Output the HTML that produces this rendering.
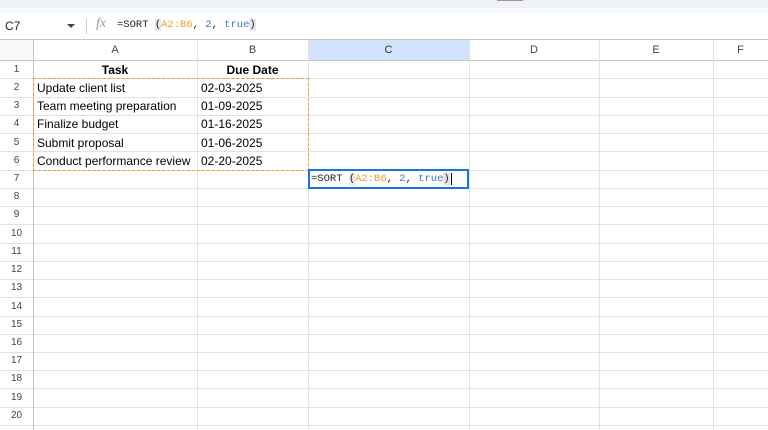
<!DOCTYPE html>
<html><head><style>
*{margin:0;padding:0;box-sizing:border-box}
body{width:768px;height:430px;overflow:hidden;background:#fff;font-family:"Liberation Sans",Arial,sans-serif;position:relative}
.a{position:absolute}
.hl{position:absolute;left:0;width:768px;height:1px;background:#e1e1e1}
.vl{position:absolute;top:40px;width:1px;height:390px;background:#e1e1e1}
.rn{position:absolute;left:0;width:33px;text-align:center;font-size:10px;color:#444;height:18px;line-height:18px}
.ch{position:absolute;top:40px;height:20px;line-height:20px;text-align:center;font-size:11px;color:#444}
.t{position:absolute;font-size:12px;color:#000;height:18px;line-height:18px;white-space:nowrap}
.mono{font-family:"Liberation Mono",monospace}
</style></head><body>
<div class="a" style="left:0;top:0;width:768px;height:8px;background:#eef1f6"></div>
<div class="a" style="left:0;top:8px;width:768px;height:6px;background:#f8fafd"></div>
<div class="a" style="left:497px;top:0;width:26px;height:1px;background:#999"></div>
<div class="a" style="left:5px;top:19px;font-size:12px;color:#222">C7</div>
<div class="a" style="left:67px;top:24px;width:0;height:0;border-left:4px solid transparent;border-right:4px solid transparent;border-top:4px solid #444"></div>
<div class="a" style="left:86px;top:18px;width:1px;height:16px;background:#ccc"></div>
<div class="a" style="left:96px;top:16px;font-size:14px;color:#999;font-style:italic;font-family:'Liberation Serif',serif">fx</div>
<div class="a mono" style="left:117px;top:19px;font-size:10.5px;color:#222">=SORT <span style="background:#e6e6e6">(</span><span style="color:#f39c36">A2:B6</span>, <span style="color:#3c78d8">2</span>, <span style="color:#3c78d8">true</span><span style="background:#e6e6e6">)</span></div>
<div class="a" style="left:0;top:40px;width:33px;height:20px;background:#f8f9fa"></div>
<div class="a" style="left:308px;top:40px;width:161px;height:20px;background:#d3e3fd"></div>
<div class="hl" style="top:39px;background:#c7c7c7"></div>
<div class="hl" style="top:60px;background:#c7c7c7"></div>
<div class="hl" style="top:78px"></div><div class="hl" style="top:97px"></div><div class="hl" style="top:115px"></div><div class="hl" style="top:133px"></div><div class="hl" style="top:151px"></div><div class="hl" style="top:170px"></div><div class="hl" style="top:188px"></div><div class="hl" style="top:206px"></div><div class="hl" style="top:224px"></div><div class="hl" style="top:243px"></div><div class="hl" style="top:261px"></div><div class="hl" style="top:279px"></div><div class="hl" style="top:297px"></div><div class="hl" style="top:316px"></div><div class="hl" style="top:334px"></div><div class="hl" style="top:352px"></div><div class="hl" style="top:370px"></div><div class="hl" style="top:388px"></div><div class="hl" style="top:407px"></div><div class="hl" style="top:425px"></div>
<div class="vl" style="left:33px;background:#c7c7c7"></div><div class="vl" style="left:197px"></div><div class="vl" style="left:308px"></div><div class="vl" style="left:469px"></div><div class="vl" style="left:599px"></div><div class="vl" style="left:713px"></div>
<div class="ch" style="left:33px;width:164px">A</div><div class="ch" style="left:197px;width:111px">B</div><div class="ch" style="left:308px;width:161px;color:#333">C</div><div class="ch" style="left:469px;width:130px">D</div><div class="ch" style="left:599px;width:114px">E</div><div class="ch" style="left:713px;width:55px">F</div>
<div class="rn" style="top:61px">1</div><div class="rn" style="top:79px">2</div><div class="rn" style="top:97px">3</div><div class="rn" style="top:115px">4</div><div class="rn" style="top:134px">5</div><div class="rn" style="top:152px">6</div><div class="rn" style="top:170px">7</div><div class="rn" style="top:188px">8</div><div class="rn" style="top:206px">9</div><div class="rn" style="top:225px">10</div><div class="rn" style="top:243px">11</div><div class="rn" style="top:261px">12</div><div class="rn" style="top:279px">13</div><div class="rn" style="top:298px">14</div><div class="rn" style="top:316px">15</div><div class="rn" style="top:334px">16</div><div class="rn" style="top:352px">17</div><div class="rn" style="top:370px">18</div><div class="rn" style="top:389px">19</div><div class="rn" style="top:407px">20</div>
<div class="t" style="left:33px;width:164px;top:61px;text-align:center;font-weight:bold">Task</div>
<div class="t" style="left:197px;width:111px;top:61px;text-align:center;font-weight:bold">Due Date</div>
<div class="t" style="left:37px;top:79px">Update client list</div><div class="t" style="left:201px;top:79px">02-03-2025</div>
<div class="t" style="left:37px;top:97px">Team meeting preparation</div><div class="t" style="left:201px;top:97px">01-09-2025</div>
<div class="t" style="left:37px;top:115px">Finalize budget</div><div class="t" style="left:201px;top:115px">01-16-2025</div>
<div class="t" style="left:37px;top:134px">Submit proposal</div><div class="t" style="left:201px;top:134px">01-06-2025</div>
<div class="t" style="left:37px;top:152px">Conduct performance review</div><div class="t" style="left:201px;top:152px">02-20-2025</div>
<div class="a" style="left:33px;top:78px;width:276px;height:93px;border:1.5px dashed #f39c36"></div>
<div class="a" style="left:308px;top:169px;width:161px;height:20px;border:2px solid #1a73e8;background:#fff"></div>
<div class="a mono" style="left:311px;top:172px;font-size:10.5px;color:#222;line-height:14px">=SORT <span style="background:#e6e6e6">(</span><span style="color:#f39c36">A2:B6</span>, <span style="color:#3c78d8">2</span>, <span style="color:#3c78d8">true</span><span style="background:#e6e6e6">)</span><span style="border-left:1.5px solid #000;margin-left:1px"></span></div>
</body></html>
